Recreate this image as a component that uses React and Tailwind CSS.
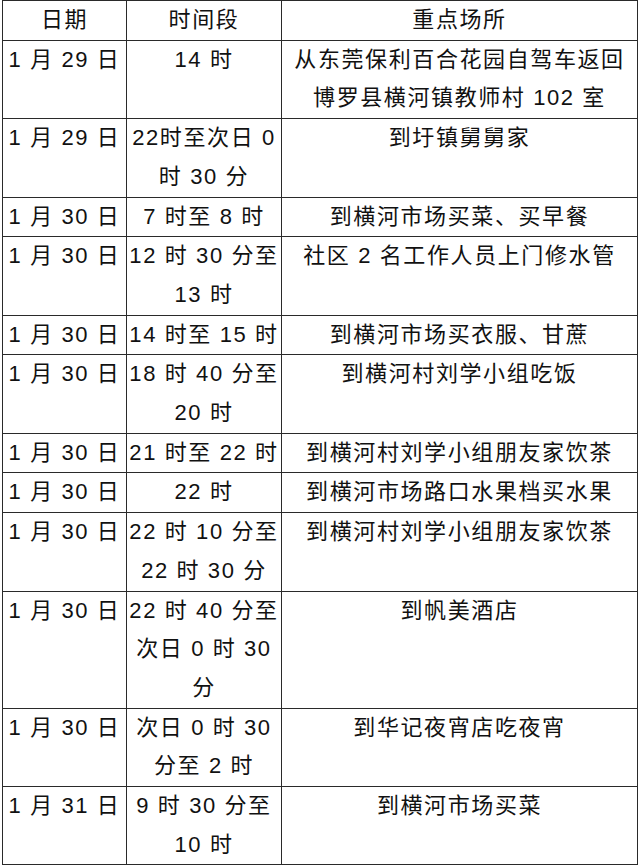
import React from "react";

const rows = [
  ["1 月 29 日", ["14 时"], ["从东莞保利百合花园自驾车返回", "博罗县横河镇教师村 102 室"]],
  ["1 月 29 日", ["22时至次日 0", "时 30 分"], ["到圩镇舅舅家"]],
  ["1 月 30 日", ["7 时至 8 时"], ["到横河市场买菜、买早餐"]],
  ["1 月 30 日", ["12 时 30 分至", "13 时"], ["社区 2 名工作人员上门修水管"]],
  ["1 月 30 日", ["14 时至 15 时"], ["到横河市场买衣服、甘蔗"]],
  ["1 月 30 日", ["18 时 40 分至", "20 时"], ["到横河村刘学小组吃饭"]],
  ["1 月 30 日", ["21 时至 22 时"], ["到横河村刘学小组朋友家饮茶"]],
  ["1 月 30 日", ["22 时"], ["到横河市场路口水果档买水果"]],
  ["1 月 30 日", ["22 时 10 分至", "22 时 30 分"], ["到横河村刘学小组朋友家饮茶"]],
  ["1 月 30 日", ["22 时 40 分至", "次日 0 时 30", "分"], ["到帆美酒店"]],
  ["1 月 30 日", ["次日 0 时 30", "分至 2 时"], ["到华记夜宵店吃夜宵"]],
  ["1 月 31 日", ["9 时 30 分至", "10 时"], ["到横河市场买菜"]],
];

const cell =
  "border border-[#2a2a2a] px-0 text-center align-top leading-[38.7px] whitespace-nowrap";

function Lines({ lines }) {
  return lines.map((l, i) => <div key={i}>{l}</div>);
}

export default function App() {
  return (
    <div className="w-[640px] h-[868px] bg-white overflow-hidden">
      <table
        className="ml-[2px] w-[635px] table-fixed border-collapse text-[22px] tracking-[1.6px] text-[#111]"
        style={{ fontFamily: '"Liberation Sans", "Noto Sans CJK SC", sans-serif' }}
      >
        <colgroup>
          <col className="w-[124px]" />
          <col className="w-[155px]" />
          <col className="w-[356px]" />
        </colgroup>
        <thead>
          <tr>
            <th className={cell + " font-normal"}>日期</th>
            <th className={cell + " font-normal"}>时间段</th>
            <th className={cell + " font-normal"}>重点场所</th>
          </tr>
        </thead>
        <tbody>
          {rows.map((r, i) => (
            <tr key={i}>
              <td className={cell}>{r[0]}</td>
              <td className={cell}>
                <Lines lines={r[1]} />
              </td>
              <td className={cell}>
                <Lines lines={r[2]} />
              </td>
            </tr>
          ))}
        </tbody>
      </table>
    </div>
  );
}
